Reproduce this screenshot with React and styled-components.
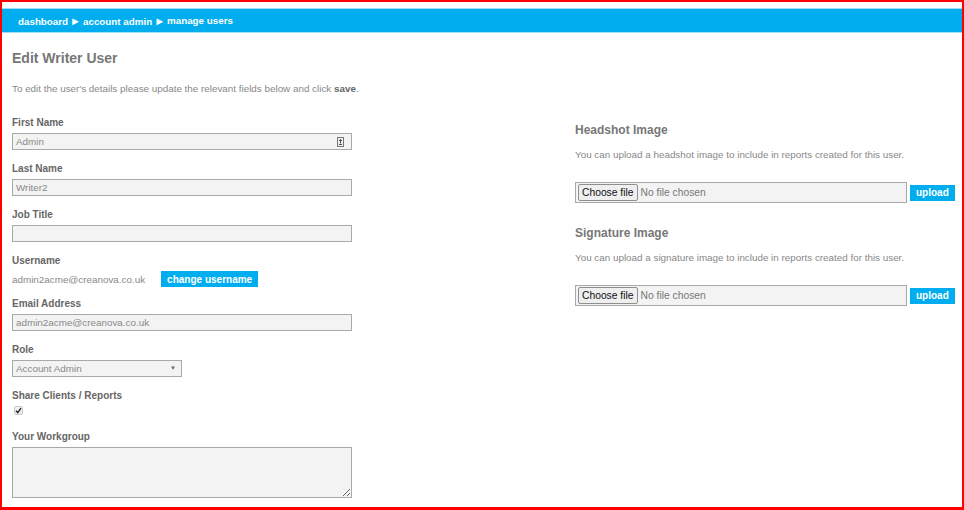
import React from 'react';
import styled, { createGlobalStyle } from 'styled-components';

const GlobalStyle = createGlobalStyle`
  html, body {
    margin: 0;
    padding: 0;
    background: #fff;
  }
  body {
    font-family: "Liberation Sans", Arial, sans-serif;
  }
`;

// Frame round the whole capture
const Frame = styled.div`
  box-sizing: border-box;
  width: 964px;
  height: 510px;
  border: 2px solid #ff0000;
  border-bottom-width: 3px;
  overflow: hidden;
  background: #fff;
`;

const TopBar = styled.nav`
  margin-top: 6px;
  height: 23px;
  background: #00aeef;
  border-top: 1px solid #9fe0f8;
  border-bottom: 1px solid #9fe0f8;
  display: flex;
  align-items: center;
  padding-left: 16px;
  color: #fff;
  font-size: 9.8px;
  font-weight: bold;
`;

const Crumb = styled.span`
  white-space: nowrap;
`;

const Arrow = styled.span`
  font-size: 11px;
  margin: 0 2px;
`;

const Content = styled.main`
  padding: 0 0 0 10px;
`;

const Title = styled.h1`
  margin: 17px 0 0;
  font-size: 14px;
  line-height: 16px;
  font-weight: bold;
  color: #777;
`;

const Intro = styled.p`
  margin: 16px 0 0;
  font-size: 9.85px;
  line-height: 14px;
  color: #888;

  b {
    color: #666;
  }
`;

const Columns = styled.div`
  display: grid;
  grid-template-columns: 563px 380px;
  margin-top: 19px;
`;

const LeftCol = styled.div`
  display: flex;
  flex-direction: column;
`;

const Field = styled.div`
  display: flex;
  flex-direction: column;
  margin-bottom: ${(p) => (p.$gap === undefined ? 11 : p.$gap)}px;
`;

const Label = styled.label`
  font-size: 10px;
  line-height: 14px;
  padding-top: 1px;
  font-weight: bold;
  color: #666;
  margin-bottom: 3px;
`;

const InputBox = styled.div`
  position: relative;
  box-sizing: border-box;
  width: ${(p) => p.$width || 340}px;
  height: 17px;
  background: #f3f3f3;
  border: 1px solid #a9a9a9;
  font-size: 9.85px;
  line-height: 15px;
  color: #888;
  padding-left: 3px;
  display: flex;
  align-items: center;
`;

const KeyIcon = styled.svg`
  position: absolute;
  right: 7px;
  top: 3px;
`;

const Caret = styled.span`
  position: absolute;
  right: 5px;
  top: 0;
  font-size: 6px;
  line-height: 15px;
  color: #666;
`;

const Textarea = styled.textarea`
  box-sizing: border-box;
  width: 340px;
  height: 51px;
  background: #f3f3f3;
  border: 1px solid #a9a9a9;
  border-radius: 0;
  margin: 0;
  font-family: inherit;
  font-size: 10px;
`;

const UserRow = styled.div`
  display: flex;
  align-items: center;
  height: 16px;
  gap: 16px;
  font-size: 9.85px;
  color: #888;
`;

const BlueButton = styled.button`
  border: none;
  border-radius: 0;
  background: #00aeef;
  color: #fff;
  font-family: inherit;
  font-weight: bold;
  font-size: 10px;
  height: 16px;
  padding: 0 ${(p) => p.$pad || 6}px;
  cursor: pointer;
`;

const CheckRow = styled.div`
  height: 12px;
  display: flex;
  align-items: flex-start;
  padding-left: 2px;
`;

const CheckBox = styled.span`
  box-sizing: border-box;
  width: 9px;
  height: 9px;
  border: 1px solid #c9c9c9;
  border-radius: 2px;
  background: #f1f1f1;
  display: flex;
  align-items: center;
  justify-content: center;
`;

const RightCol = styled.div`
  padding-top: 7px;
  display: flex;
  flex-direction: column;
`;

const Section = styled.section`
  margin-bottom: ${(p) => p.$gap || 0}px;
`;

const SectionTitle = styled.h2`
  margin: 0;
  font-size: 12px;
  line-height: 16px;
  font-weight: bold;
  color: #777;
`;

const SectionText = styled.p`
  margin: 10px 0 0;
  font-size: 9.85px;
  line-height: 14px;
  color: #888;
`;

const UploadRow = styled.div`
  margin-top: 20px;
  display: flex;
  align-items: center;
  gap: 3px;
`;

const FileBox = styled.div`
  box-sizing: border-box;
  width: 332px;
  height: 21px;
  background: #f3f3f3;
  border: 1px solid #a9a9a9;
  display: flex;
  align-items: center;
  padding-left: 2px;
  gap: 3px;
  font-size: 10.3px;
`;

const ChooseButton = styled.span`
  box-sizing: border-box;
  height: 17px;
  padding: 0 3px;
  border: 1px solid #8f8f8f;
  border-radius: 2px;
  background: #efefef;
  color: #111;
  line-height: 15px;
`;

const NoFile = styled.span`
  color: #777;
`;

const crumbs = ['dashboard', 'account admin', 'manage users'];

const uploads = [
  { title: 'Headshot Image', kind: 'headshot', gap: 22 },
  { title: 'Signature Image', kind: 'signature', gap: 0 },
];

export default function App() {
  return (
    <>
      <GlobalStyle />
      <Frame>
        <TopBar>
          {crumbs.map((c, i) => (
            <Crumb key={c}>
              {c}
              {i < crumbs.length - 1 && <Arrow>{'\u25BA'}</Arrow>}
            </Crumb>
          ))}
        </TopBar>
        <Content>
          <Title>Edit Writer User</Title>
          <Intro>
            To edit the user's details please update the relevant fields below and click <b>save</b>.
          </Intro>
          <Columns>
            <LeftCol>
              <Field>
                <Label>First Name</Label>
                <InputBox>
                  Admin
                  <KeyIcon width="7" height="10" viewBox="0 0 7 10">
                    <rect x="0.5" y="0.5" width="6" height="9" fill="#eee" stroke="#777" />
                    <path d="M3.5 2.5 L3.5 6.5 M2 4 L3.5 2.5 L5 4" stroke="#555" strokeWidth="1" fill="none" />
                    <rect x="2" y="7" width="3" height="1" fill="#555" />
                  </KeyIcon>
                </InputBox>
              </Field>
              <Field>
                <Label>Last Name</Label>
                <InputBox>Writer2</InputBox>
              </Field>
              <Field>
                <Label>Job Title</Label>
                <InputBox />
              </Field>
              <Field $gap={9}>
                <Label>Username</Label>
                <UserRow>
                  admin2acme@creanova.co.uk
                  <BlueButton>change username</BlueButton>
                </UserRow>
              </Field>
              <Field>
                <Label>Email Address</Label>
                <InputBox>admin2acme@creanova.co.uk</InputBox>
              </Field>
              <Field>
                <Label>Role</Label>
                <InputBox $width={170}>
                  Account Admin
                  <Caret>{'\u25BC'}</Caret>
                </InputBox>
              </Field>
              <Field>
                <Label>Share Clients / Reports</Label>
                <CheckRow>
                  <CheckBox>
                    <svg width="7" height="7" viewBox="0 0 7 7">
                      <path d="M1 3.8 L2.8 5.6 L6 1.2" stroke="#222" strokeWidth="1.4" fill="none" />
                    </svg>
                  </CheckBox>
                </CheckRow>
              </Field>
              <Field>
                <Label>Your Workgroup</Label>
                <Textarea />
              </Field>
            </LeftCol>
            <RightCol>
              {uploads.map((u) => (
                <Section key={u.kind} $gap={u.gap}>
                  <SectionTitle>{u.title}</SectionTitle>
                  <SectionText>
                    You can upload a {u.kind} image to include in reports created for this user.
                  </SectionText>
                  <UploadRow>
                    <FileBox>
                      <ChooseButton>Choose file</ChooseButton>
                      <NoFile>No file chosen</NoFile>
                    </FileBox>
                    <BlueButton $pad={6}>upload</BlueButton>
                  </UploadRow>
                </Section>
              ))}
            </RightCol>
          </Columns>
        </Content>
      </Frame>
    </>
  );
}
